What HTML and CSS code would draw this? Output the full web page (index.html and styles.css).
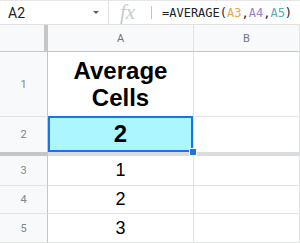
FILE: index.html
```html
<!DOCTYPE html>
<html lang="en">
<head>
    <meta charset="UTF-8">
    <meta name="viewport" content="width=device-width, initial-scale=1.0">
    <title>Average Cells</title>
    <link rel="stylesheet" href="styles.css">
</head>
<body>
    <div class="sheet">
        <!-- Formula bar -->
        <div class="formula-bar">
            <div class="name-box">
                <span>A2</span>
                <span class="caret"></span>
            </div>
            <div class="fx">fx</div>
            <div class="formula">=AVERAGE(<span class="ref-a3">A3</span>,<span class="ref-a4">A4</span>,<span class="ref-a5">A5</span>)</div>
        </div>

        <!-- Grid -->
        <div class="grid">
            <div class="corner"></div>
            <div class="col-head">A</div>
            <div class="col-head">B</div>

            <div class="row-head">1</div>
            <div class="cell title">Average<br>Cells</div>
            <div class="cell"></div>

            <div class="row-head frozen">2</div>
            <div class="cell selected frozen">2<span class="handle"></span></div>
            <div class="cell frozen"></div>

            <div class="row-head">3</div>
            <div class="cell num">1</div>
            <div class="cell"></div>

            <div class="row-head">4</div>
            <div class="cell num">2</div>
            <div class="cell"></div>

            <div class="row-head">5</div>
            <div class="cell num">3</div>
            <div class="cell"></div>
        </div>
    </div>
</body>
</html>
```

FILE: styles.css
```css
body {
    margin: 0;
    padding: 0;
    background: #ffffff;
    font-family: Roboto, "Liberation Sans", Arial, sans-serif;
    overflow: hidden;
}

.sheet {
    width: 300px;
    height: 243px;
    overflow: hidden;
}

.formula-bar {
    display: flex;
    align-items: center;
    height: 23px;
    border-top: 1px solid #e6e6e6;
    border-bottom: 1px solid #e0e0e0;
}

.name-box {
    display: flex;
    align-items: center;
    justify-content: space-between;
    width: 109px;
    height: 23px;
    padding: 0 7px 0 8px;
    box-sizing: border-box;
    border-right: 1px solid #e0e0e0;
    font-size: 14px;
    color: #202124;
}

.caret {
    width: 0;
    height: 0;
    border-left: 3.5px solid transparent;
    border-right: 3.5px solid transparent;
    border-top: 3.5px solid #5f6368;
    margin-right: 2px;
}

.fx {
    position: relative;
    width: 43px;
    padding-left: 11px;
    box-sizing: border-box;
    font-family: "Liberation Serif", serif;
    font-style: italic;
    font-size: 21px;
    line-height: 23px;
    color: #c8cacc;
}

.fx::after {
    content: "";
    position: absolute;
    right: 0;
    top: 5px;
    width: 1px;
    height: 13px;
    background: #c4c7c5;
}

.formula {
    padding-left: 10px;
    font-family: "DejaVu Sans Mono", monospace;
    font-size: 12px;
    color: #202124;
    white-space: nowrap;
}

.ref-a3 { color: #e8a748; }
.ref-a4 { color: #9e7fc6; }
.ref-a5 { color: #55adb5; }

.grid {
    display: grid;
    grid-template-columns: 48px 146px 106px;
    grid-template-rows: 27px 65px 39px 30px 28px 29px;
}

.grid > div {
    box-sizing: border-box;
    border-right: 1px solid #e2e3e3;
    border-bottom: 1px solid #e2e3e3;
}

.corner {
    background: #f8f9fa;
    border-right: 4px solid #c6c6c6 !important;
    border-bottom: 1px solid #c6c6c6 !important;
}

.col-head {
    display: flex;
    align-items: center;
    justify-content: center;
    background: #f8f9fa;
    font-size: 11px;
    color: #70757a;
    border-bottom: 1px solid #c6c6c6 !important;
}

.row-head {
    display: flex;
    align-items: center;
    justify-content: center;
    background: #f8f9fa;
    font-size: 11px;
    color: #80868b;
    border-right: 1px solid #c6c6c6 !important;
}

.cell {
    display: flex;
    align-items: center;
    justify-content: center;
    text-align: center;
    font-family: "Liberation Sans", Arial, sans-serif;
    color: #000000;
}

.title {
    font-size: 24px;
    font-weight: bold;
    line-height: 27px;
}

.num {
    font-size: 18px;
}

.frozen {
    border-bottom: 4px solid #dadce0 !important;
}

.row-head.frozen {
    border-bottom-color: #c6c6c6 !important;
}

.selected {
    position: relative;
    background: #acf6ff;
    font-size: 24px;
    font-weight: bold;
    box-shadow: inset 0 0 0 2px #1a73e8;
    margin-top: -1px;
}

.handle {
    position: absolute;
    right: -4px;
    bottom: -4px;
    width: 6px;
    height: 6px;
    background: #1a73e8;
    border: 1px solid #ffffff;
    z-index: 2;
}
```
